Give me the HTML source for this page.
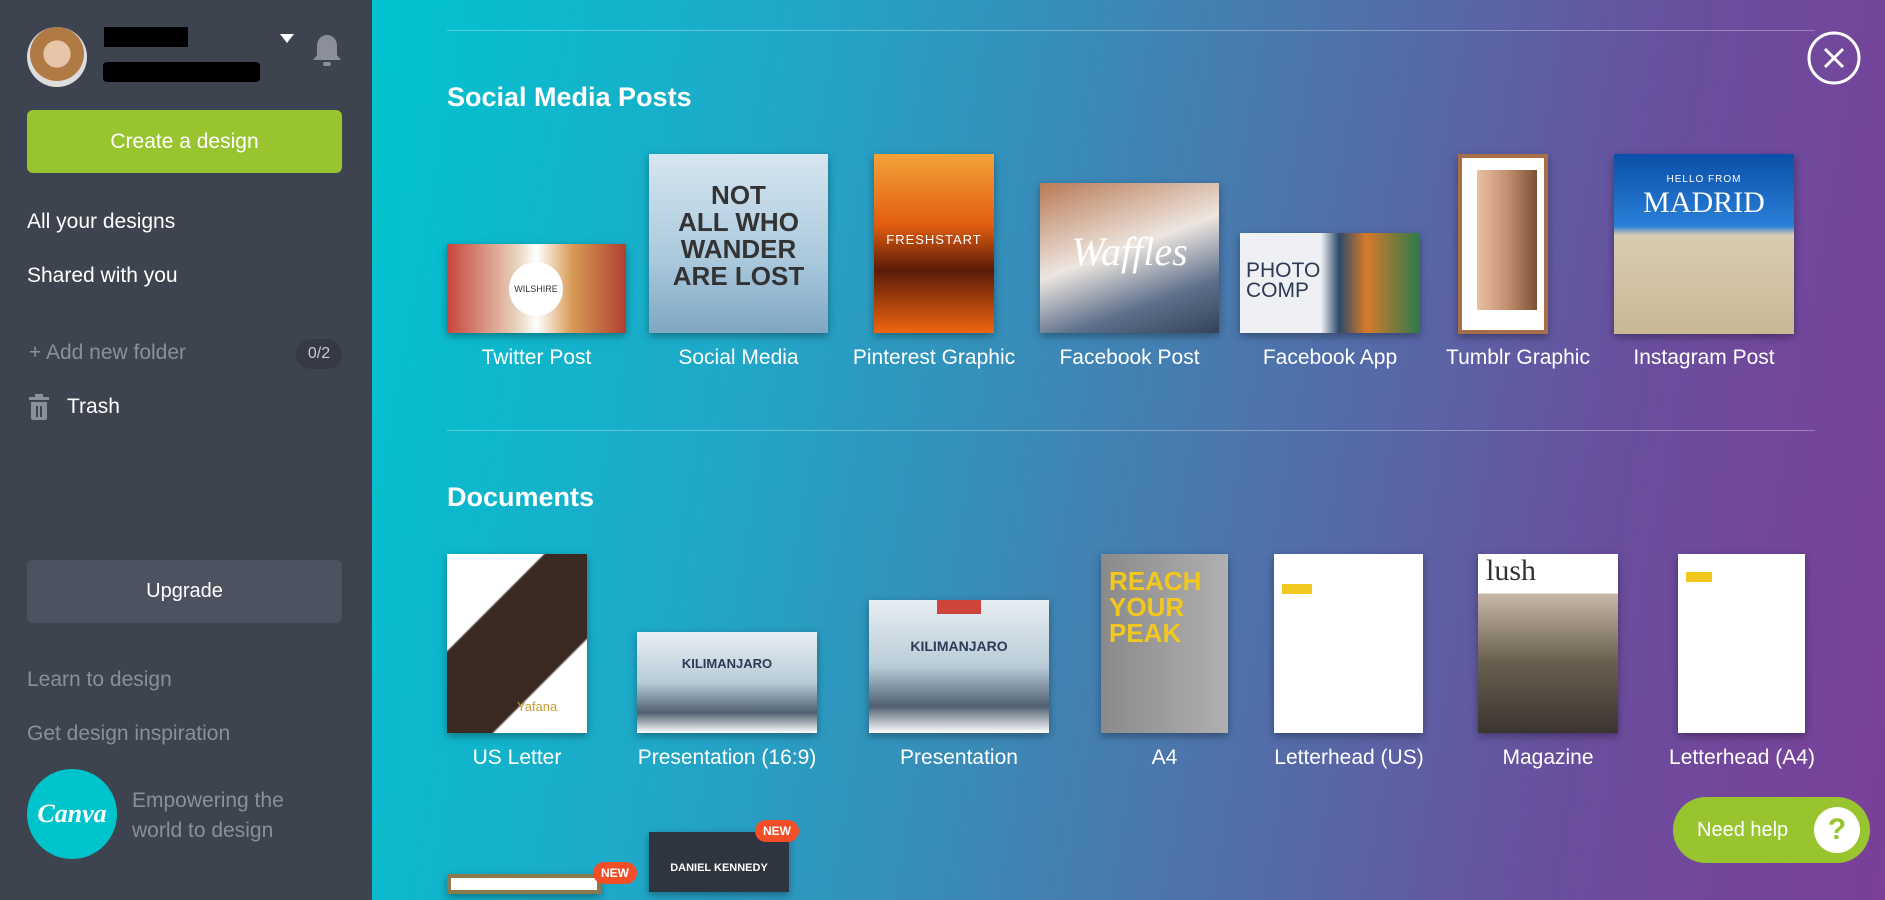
<!DOCTYPE html>
<html><head><meta charset="utf-8"><style>
*{margin:0;padding:0;box-sizing:border-box}
html{background:#6a4e9e}
body{width:1885px;height:886px;overflow:hidden;font-family:"Liberation Sans",sans-serif;position:relative;background:#6a4e9e}
.sb{position:absolute;left:0;top:0;width:372px;height:900px;background:#3e4350;z-index:1}
.main{position:absolute;left:372px;top:0;width:1513px;height:900px;background:linear-gradient(100deg,#00c4cf 0%,#1fa8c8 25%,#4a78ad 55%,#6a4e9e 80%,#7b3f98 100%)}
.a{position:absolute}
.t{position:absolute;color:#fff;font-size:21px;text-align:center;white-space:nowrap}
.th{position:absolute;box-shadow:0 3px 8px rgba(0,0,0,.35);overflow:hidden}
.h{position:absolute;color:#fff;font-weight:bold;font-size:27px;left:447px}
.line{position:absolute;left:447px;width:1368px;height:1px;background:rgba(255,255,255,.3)}
.new{position:absolute;background:#f24e27;color:#fff;font-size:12px;font-weight:bold;border-radius:11px;padding:4px 8px}
</style></head><body>
<div class="sb">
 <div class="a" style="left:27px;top:27px;width:60px;height:60px;border-radius:50%;background:radial-gradient(circle at 50% 45%,#e8c4a8 0 30%,#b07a45 31% 60%,#ddd 61%)"></div>
 <div class="a" style="left:104px;top:27px;width:84px;height:20px;background:#000"></div>
 <div class="a" style="left:103px;top:62px;width:157px;height:20px;background:#000;border-radius:4px"></div>
 <div class="a" style="left:280px;top:34px;width:0;height:0;border-left:7px solid transparent;border-right:7px solid transparent;border-top:9px solid #fff"></div>
 <svg class="a" style="left:310px;top:33px" width="34" height="36" viewBox="0 0 34 36"><path d="M17 2c-6 0-10 5-10 11v9l-4 5h28l-4-5v-9C27 7 23 2 17 2z" fill="#8a8f99"/><rect x="13" y="29" width="8" height="4" rx="2" fill="#8a8f99"/></svg>
 <div class="a" style="left:27px;top:110px;width:315px;height:63px;background:#98c42f;border-radius:6px;color:#fff;font-size:21px;text-align:center;line-height:63px">Create a design</div>
 <div class="a" style="left:27px;top:210px;color:#fff;font-size:21px">All your designs</div>
 <div class="a" style="left:27px;top:264px;color:#fff;font-size:21px">Shared with you</div>
 <div class="a" style="left:29px;top:341px;color:#8a8f99;font-size:21px">+ Add new folder</div>
 <div class="a" style="left:296px;top:339px;width:46px;height:30px;border-radius:15px;background:#353a45;color:#c8ccd2;font-size:16px;text-align:center;line-height:30px">0/2</div>
 <svg class="a" style="left:29px;top:394px" width="20" height="26" viewBox="0 0 20 26"><rect x="6" y="0" width="8" height="3" fill="#8a8f99"/><rect x="0" y="3" width="20" height="3" fill="#8a8f99"/><path d="M2 8h16v16a2 2 0 0 1-2 2H4a2 2 0 0 1-2-2z" fill="#8a8f99"/><rect x="7" y="12" width="2" height="11" fill="#3e4350"/><rect x="11" y="12" width="2" height="11" fill="#3e4350"/></svg>
 <div class="a" style="left:67px;top:395px;color:#fff;font-size:21px">Trash</div>
 <div class="a" style="left:27px;top:560px;width:315px;height:63px;background:#4c5260;border-radius:6px;color:#fff;font-size:20px;text-align:center;line-height:63px">Upgrade</div>
 <div class="a" style="left:27px;top:668px;color:#8a8f99;font-size:21px">Learn to design</div>
 <div class="a" style="left:27px;top:722px;color:#8a8f99;font-size:21px">Get design inspiration</div>
 <div class="a" style="left:27px;top:769px;width:90px;height:90px;border-radius:50%;background:#00c4cc;color:#fff;font-family:'Liberation Serif',serif;font-style:italic;font-weight:bold;font-size:26px;text-align:center;line-height:90px">Canva</div>
 <div class="a" style="left:132px;top:786px;color:#8a8f99;font-size:21px;line-height:30px">Empowering the<br>world to design</div>
</div>
<div class="main"></div>
<div class="line" style="top:30px"></div>
<div class="line" style="top:430px"></div>
<svg class="a" style="left:1806px;top:30px" width="56" height="56" viewBox="0 0 56 56"><circle cx="28" cy="28" r="25" fill="none" stroke="#fff" stroke-width="3"/><path d="M19 19l18 18M37 19L19 37" stroke="#fff" stroke-width="3"/></svg>
<div class="h" style="top:82px">Social Media Posts</div>
<div class="h" style="top:482px">Documents</div>

<div class="th" style="left:447px;top:244px;width:179px;height:89px;background:linear-gradient(90deg,#c9453b,#e8d7c0 40%,#fff 50%,#d89a55 70%,#b04030)"><div style="position:absolute;left:62px;top:18px;width:54px;height:54px;border-radius:50%;background:#fff;color:#333;font-size:9px;text-align:center;line-height:54px">WILSHIRE</div></div>
<div class="th" style="left:649px;top:154px;width:179px;height:179px;background:linear-gradient(180deg,#d6e6f0,#a9c8dc 60%,#7fa6c2);color:#333;font-weight:bold;font-size:26px;text-align:center;line-height:27px;padding-top:28px">NOT<br>ALL WHO<br>WANDER<br>ARE LOST</div>
<div class="th" style="left:874px;top:154px;width:120px;height:179px;background:linear-gradient(180deg,#f2a33a,#e25c10 40%,#5a1b08 65%,#f06510)"><div style="position:absolute;top:78px;width:100%;text-align:center;color:#fff;font-size:13px;letter-spacing:1px">FRESHSTART</div></div>
<div class="th" style="left:1040px;top:183px;width:179px;height:150px;background:linear-gradient(160deg,#b97a55,#ede6e0 45%,#5d6f8a 75%,#34435a)"><div style="position:absolute;top:45px;width:100%;text-align:center;color:#fff;font-family:'Liberation Serif',serif;font-style:italic;font-size:40px">Waffles</div></div>
<div class="th" style="left:1240px;top:233px;width:180px;height:100px;background:linear-gradient(90deg,#eef0f3 45%,#2a4a6a 55%,#d77a2a 70%,#2b7a4a)"><div style="position:absolute;left:6px;top:28px;color:#2b3b55;font-size:21px;line-height:20px">PHOTO<br>COMP</div></div>
<div class="th" style="left:1458px;top:154px;width:90px;height:180px;background:#fff;border:4px solid #a86e4a"><div style="position:absolute;left:15px;top:12px;width:60px;height:140px;background:linear-gradient(90deg,#e8c0a0,#c49070 50%,#7a5035)"></div></div>
<div class="th" style="left:1614px;top:154px;width:180px;height:180px;background:linear-gradient(180deg,#0a4fa8,#2a7fd8 40%,#d8ccb0 45%,#c9b896)"><div style="position:absolute;top:20px;width:100%;text-align:center;color:#fff;font-size:10px;letter-spacing:1px">HELLO FROM</div><div style="position:absolute;top:32px;width:100%;text-align:center;color:#fff;font-family:'Liberation Serif',serif;font-size:30px">MADRID</div></div>

<div class="t" style="left:447px;width:179px;top:346px">Twitter Post</div>
<div class="t" style="left:649px;width:179px;top:346px">Social Media</div>
<div class="t" style="left:834px;width:200px;top:346px">Pinterest Graphic</div>
<div class="t" style="left:1030px;width:199px;top:346px">Facebook Post</div>
<div class="t" style="left:1230px;width:200px;top:346px">Facebook App</div>
<div class="t" style="left:1418px;width:200px;top:346px">Tumblr Graphic</div>
<div class="t" style="left:1604px;width:200px;top:346px">Instagram Post</div>

<div class="th" style="left:447px;top:554px;width:140px;height:179px;background:linear-gradient(135deg,#fff 30%,#3a2a22 31% 70%,#fff 71%)"><div style="position:absolute;left:70px;top:145px;color:#c89a30;font-size:13px">Yafana</div></div>
<div class="th" style="left:637px;top:632px;width:180px;height:101px;background:linear-gradient(180deg,#e8eef2,#b8ccd8 50%,#506070 80%,#fff)"><div style="position:absolute;top:24px;width:100%;text-align:center;color:#2b3b55;font-weight:bold;font-size:13px">KILIMANJARO</div></div>
<div class="th" style="left:869px;top:600px;width:180px;height:133px;background:linear-gradient(180deg,#e8eef2,#b8ccd8 50%,#506070 80%,#fff)"><div style="position:absolute;left:68px;top:0;width:44px;height:14px;background:#d0453b"></div><div style="position:absolute;top:38px;width:100%;text-align:center;color:#2b3b55;font-weight:bold;font-size:14px">KILIMANJARO</div></div>
<div class="th" style="left:1101px;top:554px;width:127px;height:179px;background:linear-gradient(90deg,#8a8a8a,#b0b0b0);color:#f2c81e;font-weight:bold;font-size:26px;line-height:26px;padding:14px 8px">REACH<br>YOUR<br>PEAK</div>
<div class="th" style="left:1274px;top:554px;width:149px;height:179px;background:#fff"><div style="position:absolute;left:8px;top:30px;width:30px;height:10px;background:#f2c81e"></div></div>
<div class="th" style="left:1478px;top:554px;width:140px;height:179px;background:linear-gradient(180deg,#fff 22%,#c8b8a8 22%,#6a6050 60%,#3a3530)"><div style="position:absolute;left:8px;top:0;color:#333;font-family:'Liberation Serif',serif;font-size:30px">lush</div></div>
<div class="th" style="left:1678px;top:554px;width:127px;height:179px;background:#fff"><div style="position:absolute;left:8px;top:18px;width:26px;height:10px;background:#f2c81e"></div></div>

<div class="t" style="left:437px;width:160px;top:746px">US Letter</div>
<div class="t" style="left:617px;width:220px;top:746px">Presentation (16:9)</div>
<div class="t" style="left:859px;width:200px;top:746px">Presentation</div>
<div class="t" style="left:1101px;width:127px;top:746px">A4</div>
<div class="t" style="left:1249px;width:200px;top:746px">Letterhead (US)</div>
<div class="t" style="left:1448px;width:200px;top:746px">Magazine</div>
<div class="t" style="left:1642px;width:200px;top:746px">Letterhead (A4)</div>

<div class="th" style="left:447px;top:874px;width:154px;height:20px;background:#fff;border:4px solid #8a7a50"></div>
<div class="th" style="left:649px;top:832px;width:140px;height:60px;background:#2e3540;color:#fff;font-size:11px;font-weight:bold;text-align:center;padding-top:30px">DANIEL KENNEDY</div>
<div class="new" style="left:593px;top:862px">NEW</div>
<div class="new" style="left:755px;top:820px">NEW</div>

<div class="a" style="left:1673px;top:797px;width:197px;height:66px;border-radius:33px;background:#98c42f;color:#fff;font-size:20px;line-height:66px;padding-left:24px">Need help<div style="position:absolute;right:10px;top:10px;width:46px;height:46px;border-radius:50%;background:#fff;color:#98c42f;font-weight:bold;font-size:30px;text-align:center;line-height:46px">?</div></div>
</body></html>
